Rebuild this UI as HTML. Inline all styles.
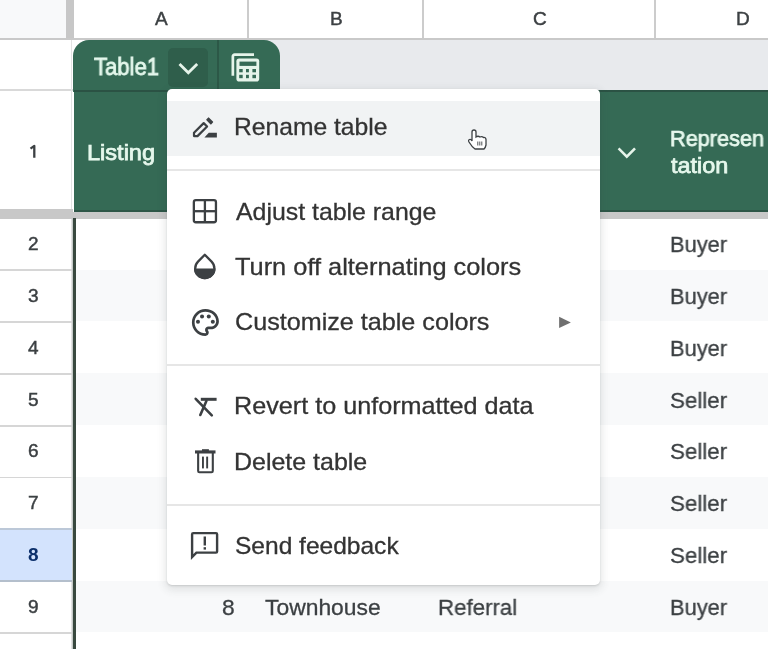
<!DOCTYPE html>
<html><head><meta charset="utf-8">
<style>
html,body{margin:0;padding:0;width:768px;height:649px;overflow:hidden;background:#fff;}
body{position:relative;font-family:"Liberation Sans",sans-serif;}
.a{position:absolute;}
.t{position:absolute;white-space:nowrap;transform-origin:0 0;will-change:transform;}
.d{-webkit-text-stroke:0.3px currentColor;}
</style></head><body>

<!-- column header row -->
<div class="a" style="left:0;top:0;width:66px;height:38px;background:#f8f9fa"></div>
<div class="a" style="left:66px;top:0;width:8px;height:40px;background:#c7c7c7"></div>
<div class="a" style="left:0;top:38px;width:768px;height:2px;background:#c9c9c9"></div>
<div class="a" style="left:247px;top:0;width:2px;height:38px;background:#cccccc"></div>
<div class="a" style="left:422px;top:0;width:2px;height:38px;background:#cccccc"></div>
<div class="a" style="left:654px;top:0;width:2px;height:38px;background:#cccccc"></div>
<div class="t" style="left:155px;top:9px;font-size:19px;line-height:19px;color:#3c4043;-webkit-text-stroke:0.45px #3c4043">A</div>
<div class="t" style="left:330px;top:9px;font-size:19px;line-height:19px;color:#3c4043;-webkit-text-stroke:0.45px #3c4043">B</div>
<div class="t" style="left:533px;top:9px;font-size:19px;line-height:19px;color:#3c4043;-webkit-text-stroke:0.45px #3c4043">C</div>
<div class="t" style="left:736px;top:9px;font-size:19px;line-height:19px;color:#3c4043;-webkit-text-stroke:0.45px #3c4043">D</div>

<!-- table name band -->
<div class="a" style="left:200px;top:40px;width:568px;height:50px;background:#e8eaed"></div>

<!-- row header lines -->
<div class="a" style="left:0;top:89px;width:73px;height:2px;background:#d9d9d9"></div>
<div class="a" style="left:71px;top:40px;width:1px;height:609px;background:#e3e3e3"></div>

<!-- green header row -->
<div class="a" style="left:74px;top:90px;width:694px;height:121px;background:#356a55"></div>
<div class="a" style="left:74px;top:90px;width:694px;height:2px;background:#2b5244"></div>
<div class="a" style="left:74px;top:209.5px;width:694px;height:2px;background:#2d5647"></div>

<!-- tab -->
<div class="a" style="left:73px;top:40px;width:207px;height:52px;background:#356a55;border-radius:16px 16px 0 0"></div>
<div class="a" style="left:168px;top:48px;width:40px;height:38.5px;background:#2f5e4b;border-radius:5px"></div>
<div class="a" style="left:216.5px;top:40px;width:2px;height:50px;background:#2c5847"></div>
<div class="a" style="left:74px;top:89.5px;width:694px;height:2.5px;background:#2b5244"></div>

<!-- freeze bar -->
<div class="a" style="left:0;top:211.5px;width:768px;height:7px;background:#c8c8c8"></div>
<div class="a" style="left:0;top:209px;width:73px;height:10px;background:#c8c8c8"></div>

<!-- banded rows -->
<div class="a" style="left:75px;top:269.7px;width:693px;height:51.8px;background:#f8f9fa"></div>
<div class="a" style="left:75px;top:373.4px;width:693px;height:51.8px;background:#f8f9fa"></div>
<div class="a" style="left:75px;top:477px;width:693px;height:51.8px;background:#f8f9fa"></div>
<div class="a" style="left:75px;top:580.6px;width:693px;height:51.8px;background:#f8f9fa"></div>

<!-- row header row lines -->
<div class="a" style="left:0;top:269px;width:73px;height:1.5px;background:#d6d6d6"></div>
<div class="a" style="left:0;top:321px;width:73px;height:1.5px;background:#d6d6d6"></div>
<div class="a" style="left:0;top:373px;width:73px;height:1.5px;background:#d6d6d6"></div>
<div class="a" style="left:0;top:425px;width:73px;height:1.5px;background:#d6d6d6"></div>
<div class="a" style="left:0;top:476.5px;width:73px;height:1.5px;background:#d6d6d6"></div>
<div class="a" style="left:0;top:528.5px;width:73px;height:52px;background:#d3e3fd"></div>
<div class="a" style="left:0;top:528px;width:73px;height:1.5px;background:#bcc8d8"></div>
<div class="a" style="left:0;top:580px;width:73px;height:1.5px;background:#b4bfcc"></div>
<div class="a" style="left:0;top:632px;width:73px;height:1.5px;background:#d6d6d6"></div>

<!-- green left border -->
<div class="a" style="left:72px;top:218px;width:1.5px;height:431px;background:#c5cac8"></div>
<div class="a" style="left:73px;top:218px;width:2.6px;height:431px;background:#39493f"></div>

<!-- row numbers -->
<svg class="a" style="left:0;top:0" width="80" height="200"><path d="M30.5,148.6 L34.3,145.9 L34.3,157.8" fill="none" stroke="#3c4043" stroke-width="2.3" stroke-linejoin="round"/></svg>
<div class="t" style="left:28px;top:234px;font-size:19px;line-height:19px;color:#3c4043;-webkit-text-stroke:0.45px #3c4043">2</div>
<div class="t" style="left:28px;top:286px;font-size:19px;line-height:19px;color:#3c4043;-webkit-text-stroke:0.45px #3c4043">3</div>
<div class="t" style="left:28px;top:338px;font-size:19px;line-height:19px;color:#3c4043;-webkit-text-stroke:0.45px #3c4043">4</div>
<div class="t" style="left:28px;top:390px;font-size:19px;line-height:19px;color:#3c4043;-webkit-text-stroke:0.45px #3c4043">5</div>
<div class="t" style="left:28px;top:441px;font-size:19px;line-height:19px;color:#3c4043;-webkit-text-stroke:0.45px #3c4043">6</div>
<div class="t" style="left:28px;top:493px;font-size:19px;line-height:19px;color:#3c4043;-webkit-text-stroke:0.45px #3c4043">7</div>
<div class="t" style="left:28px;top:545px;font-size:19px;line-height:19px;font-weight:bold;color:#0b2f6b">8</div>
<div class="t" style="left:28px;top:597px;font-size:19px;line-height:19px;color:#3c4043;-webkit-text-stroke:0.45px #3c4043">9</div>


<!-- data text -->
<div class="t d" style="left:670.3px;top:233.1px;font-size:22.8px;line-height:22.8px;color:#3c4043;transform:scaleX(0.958)">Buyer</div>
<div class="t d" style="left:670.3px;top:284.9px;font-size:22.8px;line-height:22.8px;color:#3c4043;transform:scaleX(0.958)">Buyer</div>
<div class="t d" style="left:670.3px;top:336.7px;font-size:22.8px;line-height:22.8px;color:#3c4043;transform:scaleX(0.958)">Buyer</div>
<div class="t d" style="left:669.9px;top:388.5px;font-size:22.8px;line-height:22.8px;color:#3c4043;transform:scaleX(0.979)">Seller</div>
<div class="t d" style="left:669.9px;top:440.3px;font-size:22.8px;line-height:22.8px;color:#3c4043;transform:scaleX(0.979)">Seller</div>
<div class="t d" style="left:669.9px;top:492.1px;font-size:22.8px;line-height:22.8px;color:#3c4043;transform:scaleX(0.979)">Seller</div>
<div class="t d" style="left:669.9px;top:543.9px;font-size:22.8px;line-height:22.8px;color:#3c4043;transform:scaleX(0.979)">Seller</div>
<div class="t d" style="left:670.3px;top:595.7px;font-size:22.8px;line-height:22.8px;color:#3c4043;transform:scaleX(0.958)">Buyer</div>
<div class="t d" style="left:221.7px;top:595.7px;font-size:22.8px;line-height:22.8px;color:#3c4043">8</div>
<div class="t d" style="left:264.9px;top:595.7px;font-size:22.8px;line-height:22.8px;color:#3c4043;transform:scaleX(1.003)">Townhouse</div>
<div class="t d" style="left:438.4px;top:595.7px;font-size:22.8px;line-height:22.8px;color:#3c4043;transform:scaleX(0.977)">Referral</div>

<!-- header texts -->
<div class="t" style="left:94px;top:55.5px;font-size:23px;line-height:23px;color:#e4f7ec;-webkit-text-stroke:0.8px #e4f7ec;transform:scaleX(0.96)">Table1</div>
<div class="t" style="left:87.3px;top:141.5px;font-size:22px;line-height:22px;color:#e4f7ec;-webkit-text-stroke:0.75px #e8f9ee;transform:scaleX(1.07)">Listing</div>
<div class="t" style="left:670.1px;top:127.5px;font-size:22px;line-height:22px;color:#e4f7ec;-webkit-text-stroke:0.75px #e8f9ee;transform:scaleX(0.985)">Represen</div>
<div class="t" style="left:671px;top:154.8px;font-size:22px;line-height:22px;color:#e4f7ec;-webkit-text-stroke:0.75px #e8f9ee;transform:scaleX(1.065)">tation</div>

<svg class="a" style="left:0;top:0" width="768" height="649" viewBox="0 0 768 649">
  <g fill="none" stroke="#e6f4ea" stroke-width="2.8" stroke-linecap="square">
    <polyline points="180.5,65 188.3,72.8 196.2,65"/>
    <polyline points="619.5,149.3 626.8,156.6 634.1,149.3" stroke-width="2.6"/>
  </g>
  <path d="M232.85,75.7 V56.5 a1.8,1.8 0 0 1 1.8,-1.8 H254" fill="none" stroke="#e6f4ea" stroke-width="2.7"/>
  <rect x="236.4" y="58.5" width="22.8" height="23.1" rx="2.8" fill="#e6f4ea"/>
  <g fill="#356a55">
    <rect x="239.5" y="61.6" width="16.9" height="4.3"/>
    <rect x="239.2" y="69" width="3.5" height="3.3"/><rect x="246" y="69" width="2.9" height="3.3"/><rect x="252.4" y="69" width="3.6" height="3.3"/>
    <rect x="239.2" y="74.8" width="3.5" height="3.4"/><rect x="246" y="74.8" width="2.9" height="3.4"/><rect x="252.4" y="74.8" width="3.6" height="3.4"/>
  </g>
</svg>

<!-- menu -->
<div class="a" style="left:167.3px;top:88.8px;width:432.4px;height:496.2px;background:#fff;border-radius:5px;box-shadow:0 1px 2px rgba(60,64,67,.18),0 3px 8px 2px rgba(60,64,67,.12)"></div>
<div class="a" style="left:167.3px;top:100.5px;width:432.4px;height:55px;background:#f1f3f4"></div>
<div class="a" style="left:167.3px;top:169px;width:432.4px;height:2px;background:#e6e6e6"></div>
<div class="a" style="left:167.3px;top:364px;width:432.4px;height:2px;background:#e6e6e6"></div>
<div class="a" style="left:167.3px;top:503.5px;width:432.4px;height:2px;background:#e6e6e6"></div>

<div class="t d" style="left:233.9px;top:115.4px;font-size:24px;line-height:24px;color:#333;transform:scaleX(1.027)">Rename table</div>
<div class="t d" style="left:235.5px;top:199.7px;font-size:24px;line-height:24px;color:#333;transform:scaleX(1.036)">Adjust table range</div>
<div class="t d" style="left:235.1px;top:255.1px;font-size:24px;line-height:24px;color:#333;transform:scaleX(1.057)">Turn off alternating colors</div>
<div class="t d" style="left:234.9px;top:310.1px;font-size:24px;line-height:24px;color:#333;transform:scaleX(1.048)">Customize table colors</div>
<div class="t d" style="left:234.2px;top:394.3px;font-size:24px;line-height:24px;color:#333;transform:scaleX(1.049)">Revert to unformatted data</div>
<div class="t d" style="left:233.5px;top:449.7px;font-size:24px;line-height:24px;color:#333;transform:scaleX(1.04)">Delete table</div>
<div class="t d" style="left:234.5px;top:533.5px;font-size:24px;line-height:24px;color:#333;transform:scaleX(1.022)">Send feedback</div>

<svg class="a" style="left:0;top:0" width="768" height="649" viewBox="0 0 768 649">
  <!-- pencil -->
  <g fill="#3c4043">
    <path d="M194,132.8 L203.7,123.1 L207.1,126.5 L197.5,136.1 L194,136.1 Z" fill="none" stroke="#3c4043" stroke-width="2.2" stroke-linejoin="round"/>
    <rect x="207.8" y="117.4" width="3.8" height="7" rx="0.8" transform="rotate(-45 209.7 120.9)"/>
    <polygon points="204.4,137.6 208.8,132.7 216.9,132.7 216.9,137.6"/>
  </g>
  <!-- grid -->
  <g fill="none" stroke="#3c4043" stroke-width="2.3">
    <rect x="193.85" y="200.15" width="22.1" height="22.1" rx="2"/>
    <line x1="204.9" y1="200" x2="204.9" y2="222.3"/>
    <line x1="193.85" y1="211.2" x2="215.95" y2="211.2"/>
  </g>
  <!-- drop -->
  <path d="M204.8,254.8 L198.01,261.61 A9.6,9.6 0 1 0 211.59,261.61 Z" fill="none" stroke="#3c4043" stroke-width="2.3" stroke-linejoin="round"/>
  <path d="M194.05,268.4 A10.75,10.75 0 0 0 215.55,268.4 Z" fill="#3c4043"/>
  <!-- palette -->
  <g transform="translate(189.2 306.3) scale(1.35)" fill="#3c4043">
    <path d="M12 22C6.49 22 2 17.51 2 12S6.49 2 12 2s10 4.04 10 9c0 3.31-2.69 6-6 6h-1.77c-.28 0-.5.22-.5.5 0 .12.05.23.13.33.41.47.64 1.06.64 1.67 0 1.38-1.12 2.5-2.5 2.5zm0-18c-4.41 0-8 3.59-8 8s3.590 8 8 8c.28 0 .5-.22.5-.5 0-.16-.08-.28-.14-.35-.41-.46-.63-1.05-.63-1.65 0-1.38 1.12-2.5 2.5-2.5H16c2.21 0 4-1.79 4-4 0-3.86-3.59-7-8-7z"/>
    <circle cx="6.5" cy="11.5" r="1.5"/><circle cx="9.5" cy="7.5" r="1.5"/><circle cx="14.5" cy="7.5" r="1.5"/><circle cx="17.5" cy="11.5" r="1.5"/>
  </g>
  <!-- format clear -->
  <g stroke="#3c4043" stroke-width="2.6" fill="none" stroke-linecap="round">
    <line x1="195.7" y1="398.8" x2="211.8" y2="415.4"/>
    <line x1="206.4" y1="401" x2="200.3" y2="415"/>
  </g>
  <rect x="200.8" y="397.8" width="15.8" height="3" fill="#3c4043"/>
  <!-- trash -->
  <g fill="#3c4043">
    <rect x="195" y="450.4" width="20.5" height="3.1"/>
    <rect x="202" y="449.2" width="6.9" height="2"/>
    <rect x="202" y="456.6" width="1.9" height="11.8"/>
    <rect x="206.2" y="456.6" width="1.9" height="11.8"/>
  </g>
  <path d="M198.15,452 V471 a1.3,1.3 0 0 0 1.3,1.3 H211.5 a1.3,1.3 0 0 0 1.3,-1.3 V452" fill="none" stroke="#3c4043" stroke-width="2.1"/>
  <!-- feedback -->
  <path d="M192.1,557 L192.1,534.3 Q192.1,533.1 193.3,533.1 L216,533.1 Q217.1,533.1 217.1,534.3 L217.1,551.4 Q217.1,552.6 216,552.6 L196.4,552.6 Z" fill="none" stroke="#3c4043" stroke-width="2.4" stroke-linejoin="miter"/>
  <rect x="203.6" y="536.5" width="2.4" height="9" fill="#3c4043"/>
  <rect x="203.6" y="547.2" width="2.4" height="2.4" fill="#3c4043"/>
  <!-- submenu arrow -->
  <polygon points="559.1,316.8 570.9,322.5 559.1,328.1" fill="#707070"/>
  <!-- hand cursor -->
  <path d="M472,141 L472,132 Q472,130 474,130 Q476,130 476,132 L476,137 Q478,135.5 480,137 Q482,136 483.5,137.5 Q485.5,137 486,139.5 L486,145 Q485.5,147.5 484,149 L475,149 Q472,147 469,142 Q468,140 469.5,139.5 Q471,139 472,141 Z" fill="#fff" stroke="#3c4043" stroke-width="1.3"/>
  <g stroke="#3c4043" stroke-width="0.9"><line x1="477.8" y1="141.5" x2="477.8" y2="145.5"/><line x1="479.8" y1="141.5" x2="479.8" y2="145.5"/><line x1="481.8" y1="141.5" x2="481.8" y2="145.5"/></g>
</svg>

</body></html>
